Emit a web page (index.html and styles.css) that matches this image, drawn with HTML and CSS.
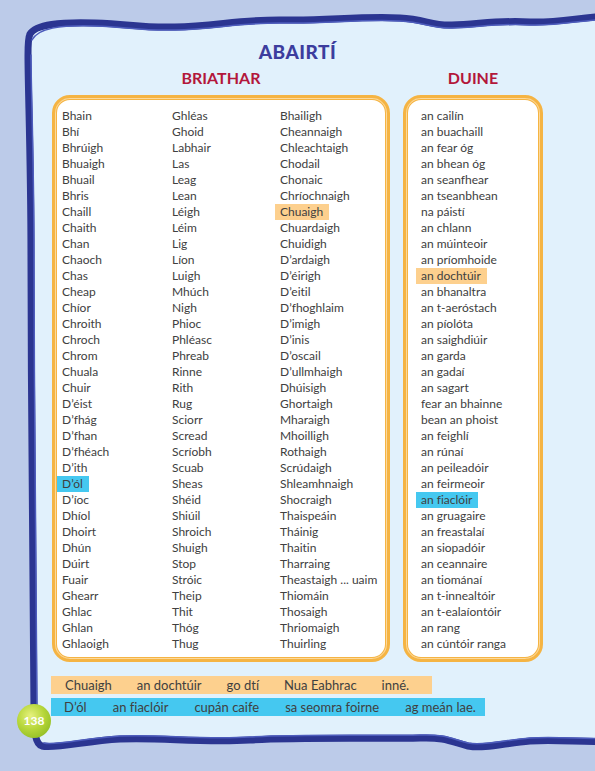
FILE: index.html
```html
<!DOCTYPE html>
<html lang="ga">
<head>
    <meta charset="UTF-8">
    <meta name="viewport" content="width=device-width, initial-scale=1.0">
    <title>Abairtí</title>
    <link rel="stylesheet" href="styles.css">
</head>
<body>

    <!-- wavy page frame -->
    <svg class="frame" viewBox="0 0 595 771" width="595" height="771">
        <path class="frame-fill" d="M30 34 C36 24 60 22 95 23 C130 24 140 28 175 27 C215 26 245 19 285 20 C325 21 360 16 400 18 C425 19 432 26 452 25 C480 24 500 20 530 22 C560 23 580 17 610 16 L610 741 C585 743 560 739 530 741 C505 743 485 749 468 746 C452 742 445 737 420 738 C380 739 300 737 250 740 C200 743 160 737 120 739 C85 741 55 749 42 746 C35 744 34 730 34 712 C34 600 31 420 31 260 C31 160 28 90 28 55 C28 45 28 38 30 34 Z"/>
        <path class="frame-line" d="M30 34 C36 24 60 22 95 23 C130 24 140 28 175 27 C215 26 245 19 285 20 C325 21 360 16 400 18 C425 19 432 26 452 25 C480 24 500 20 530 22 C560 23 580 17 610 16 M610 741 C585 743 560 739 530 741 C505 743 485 749 468 746 C452 742 445 737 420 738 C380 739 300 737 250 740 C200 743 160 737 120 739 C85 741 55 749 42 746 C35 744 34 730 34 712 C34 600 31 420 31 260 C31 160 28 90 28 55 C28 45 28 38 30 34"/>
        <path class="frame-gloss" d="M32 40 C38 28 60 25 95 26 C130 27 140 31 175 30 C215 29 245 22 285 23 C325 24 360 19 400 21 C425 22 432 29 452 28 C480 27 500 23 530 25 C560 26 580 20 610 19 M610 738 C585 740 560 736 530 738 C505 740 485 746 468 743 C452 739 445 734 420 735 C380 736 300 734 250 737 C200 740 160 734 120 736 C85 738 55 746 44 743 M37 712 C37 600 34 420 34 260 C34 160 31 90 31 55"/>
    </svg>

    <div class="badge">138</div>

    <main class="sheet">
        <h1 class="title">ABAIRTÍ</h1>

        <div class="heads">
            <h2 class="head head-verbs">BRIATHAR</h2>
            <h2 class="head head-people">DUINE</h2>
        </div>

        <div class="boxes">
            <div class="box box-verbs">
                <div class="col">
                    <div>Bhain</div>
                    <div>Bhí</div>
                    <div>Bhrúigh</div>
                    <div>Bhuaigh</div>
                    <div>Bhuail</div>
                    <div>Bhris</div>
                    <div>Chaill</div>
                    <div>Chaith</div>
                    <div>Chan</div>
                    <div>Chaoch</div>
                    <div>Chas</div>
                    <div>Cheap</div>
                    <div>Chíor</div>
                    <div>Chroith</div>
                    <div>Chroch</div>
                    <div>Chrom</div>
                    <div>Chuala</div>
                    <div>Chuir</div>
                    <div>D’éist</div>
                    <div>D’fhág</div>
                    <div>D’fhan</div>
                    <div>D’fhéach</div>
                    <div>D’ith</div>
                    <div><span class="mark mark-blue">D’ól</span></div>
                    <div>D’íoc</div>
                    <div>Dhíol</div>
                    <div>Dhoirt</div>
                    <div>Dhún</div>
                    <div>Dúirt</div>
                    <div>Fuair</div>
                    <div>Ghearr</div>
                    <div>Ghlac</div>
                    <div>Ghlan</div>
                    <div>Ghlaoigh</div>
                </div>
                <div class="col">
                    <div>Ghléas</div>
                    <div>Ghoid</div>
                    <div>Labhair</div>
                    <div>Las</div>
                    <div>Leag</div>
                    <div>Lean</div>
                    <div>Léigh</div>
                    <div>Léim</div>
                    <div>Lig</div>
                    <div>Líon</div>
                    <div>Luigh</div>
                    <div>Mhúch</div>
                    <div>Nigh</div>
                    <div>Phioc</div>
                    <div>Phléasc</div>
                    <div>Phreab</div>
                    <div>Rinne</div>
                    <div>Rith</div>
                    <div>Rug</div>
                    <div>Sciorr</div>
                    <div>Scread</div>
                    <div>Scríobh</div>
                    <div>Scuab</div>
                    <div>Sheas</div>
                    <div>Shéid</div>
                    <div>Shiúil</div>
                    <div>Shroich</div>
                    <div>Shuigh</div>
                    <div>Stop</div>
                    <div>Stróic</div>
                    <div>Theip</div>
                    <div>Thit</div>
                    <div>Thóg</div>
                    <div>Thug</div>
                </div>
                <div class="col">
                    <div>Bhailigh</div>
                    <div>Cheannaigh</div>
                    <div>Chleachtaigh</div>
                    <div>Chodail</div>
                    <div>Chonaic</div>
                    <div>Chríochnaigh</div>
                    <div><span class="mark mark-orange">Chuaigh</span></div>
                    <div>Chuardaigh</div>
                    <div>Chuidigh</div>
                    <div>D’ardaigh</div>
                    <div>D’éirigh</div>
                    <div>D’eitil</div>
                    <div>D’fhoghlaim</div>
                    <div>D’imigh</div>
                    <div>D’inis</div>
                    <div>D’oscail</div>
                    <div>D’ullmhaigh</div>
                    <div>Dhúisigh</div>
                    <div>Ghortaigh</div>
                    <div>Mharaigh</div>
                    <div>Mhoilligh</div>
                    <div>Rothaigh</div>
                    <div>Scrúdaigh</div>
                    <div>Shleamhnaigh</div>
                    <div>Shocraigh</div>
                    <div>Thaispeáin</div>
                    <div>Tháinig</div>
                    <div>Thaitin</div>
                    <div>Tharraing</div>
                    <div>Theastaigh ... uaim</div>
                    <div>Thiomáin</div>
                    <div>Thosaigh</div>
                    <div>Thriomaigh</div>
                    <div>Thuirling</div>
                </div>
            </div>

            <div class="box box-people">
                <div class="col">
                    <div>an cailín</div>
                    <div>an buachaill</div>
                    <div>an fear óg</div>
                    <div>an bhean óg</div>
                    <div>an seanfhear</div>
                    <div>an tseanbhean</div>
                    <div>na páistí</div>
                    <div>an chlann</div>
                    <div>an múinteoir</div>
                    <div>an príomhoide</div>
                    <div><span class="mark mark-orange">an dochtúir</span></div>
                    <div>an bhanaltra</div>
                    <div>an t-aeróstach</div>
                    <div>an píolóta</div>
                    <div>an saighdiúir</div>
                    <div>an garda</div>
                    <div>an gadaí</div>
                    <div>an sagart</div>
                    <div>fear an bhainne</div>
                    <div>bean an phoist</div>
                    <div>an feighlí</div>
                    <div>an rúnaí</div>
                    <div>an peileadóir</div>
                    <div>an feirmeoir</div>
                    <div><span class="mark mark-blue">an fiaclóir</span></div>
                    <div>an gruagaire</div>
                    <div>an freastalaí</div>
                    <div>an siopadóir</div>
                    <div>an ceannaire</div>
                    <div>an tiománaí</div>
                    <div>an t-innealtóir</div>
                    <div>an t-ealaíontóir</div>
                    <div>an rang</div>
                    <div>an cúntóir ranga</div>
                </div>
            </div>
        </div>

        <!-- example sentences -->
        <div class="sentences">
            <div class="sentence sentence-orange">
                <span>Chuaigh</span>
                <span>an dochtúir</span>
                <span>go dtí</span>
                <span>Nua Eabhrac</span>
                <span>inné.</span>
            </div>
            <div class="sentence sentence-blue">
                <span>D’ól</span>
                <span>an fiaclóir</span>
                <span>cupán caife</span>
                <span>sa seomra foirne</span>
                <span>ag meán lae.</span>
            </div>
        </div>
    </main>

</body>
</html>
```

FILE: styles.css
```css
/* PAGE */
body {
    margin: 0;
    width: 595px;
    height: 771px;
    overflow: hidden;
    position: relative;
    background-color: #bccbe9;
    font-family: Lato, "Noto Sans", sans-serif;
    font-variant-ligatures: none;
    color: #404040;
}

.frame {
    position: absolute;
    top: 0;
    left: 0;
}

.frame-fill {
    fill: #e1f1fc;
}

.frame-line {
    fill: none;
    stroke: #2b3591;
    stroke-width: 7;
    stroke-linecap: round;
}

.frame-gloss {
    fill: none;
    stroke: #4d5cbc;
    stroke-width: 1.5;
    stroke-linecap: round;
}

.badge {
    position: absolute;
    left: 17px;
    top: 704px;
    width: 34px;
    height: 34px;
    border-radius: 50%;
    background: radial-gradient(circle at 40% 35%, #e6f17e 0%, #b6d63a 45%, #7fb11a 100%);
    color: white;
    font-weight: 700;
    font-size: 12px;
    line-height: 34px;
    text-align: center;
    z-index: 2;
}

.sheet {
    position: relative;
    z-index: 1;
    padding-top: 41px;
}

/* HEADINGS */
.title {
    margin: 0;
    text-align: center;
    font-size: 19px;
    line-height: 22px;
    font-weight: 900;
    color: #3c3d9e;
    letter-spacing: 0.5px;
}

.heads {
    display: flex;
    gap: 13px;
    margin: 6px 0 0 52px;
}

.head {
    margin: 0;
    text-align: center;
    font-size: 16px;
    line-height: 18px;
    font-weight: 700;
    color: #b3173b;
}

.head-verbs {
    width: 338px;
}

.head-people {
    width: 140px;
}

/* WORD BOXES */
.boxes {
    display: flex;
    gap: 13px;
    margin: 8px 0 0 52px;
}

.box {
    box-sizing: border-box;
    height: 567px;
    background-color: white;
    border: 3px solid #f5b443;
    border-radius: 18px;
    box-shadow: inset 0 0 0 1px #fcd99c, inset 0 0 0 2px #f5b443;
    padding-top: 10px;
    font-size: 12px;
    line-height: 16px;
}

.box-verbs {
    width: 338px;
    padding-left: 7px;
    display: grid;
    grid-template-columns: 110px 108px 1fr;
}

.box-people {
    width: 140px;
    padding-left: 15px;
}

.mark {
    display: inline-block;
    margin-left: -5px;
    padding: 0 6px 0 5px;
}

.mark-orange {
    background-color: #fdd08e;
}

.mark-blue {
    background-color: #45c8f0;
}

/* SENTENCES */
.sentences {
    display: flex;
    flex-direction: column;
    align-items: flex-start;
    gap: 4px;
    margin: 14px 0 0 51px;
}

.sentence {
    display: flex;
    height: 18px;
    align-items: center;
    padding: 0 14px;
    font-size: 13px;
    white-space: nowrap;
    box-sizing: border-box;
}

.sentence span {
    flex-shrink: 0;
}

.sentence-orange {
    gap: 25px;
    width: 381px;
    background-color: #fdd08e;
}

.sentence-blue {
    gap: 26px;
    width: 434px;
    background-color: #45c8f0;
    padding-left: 13px;
}
```
